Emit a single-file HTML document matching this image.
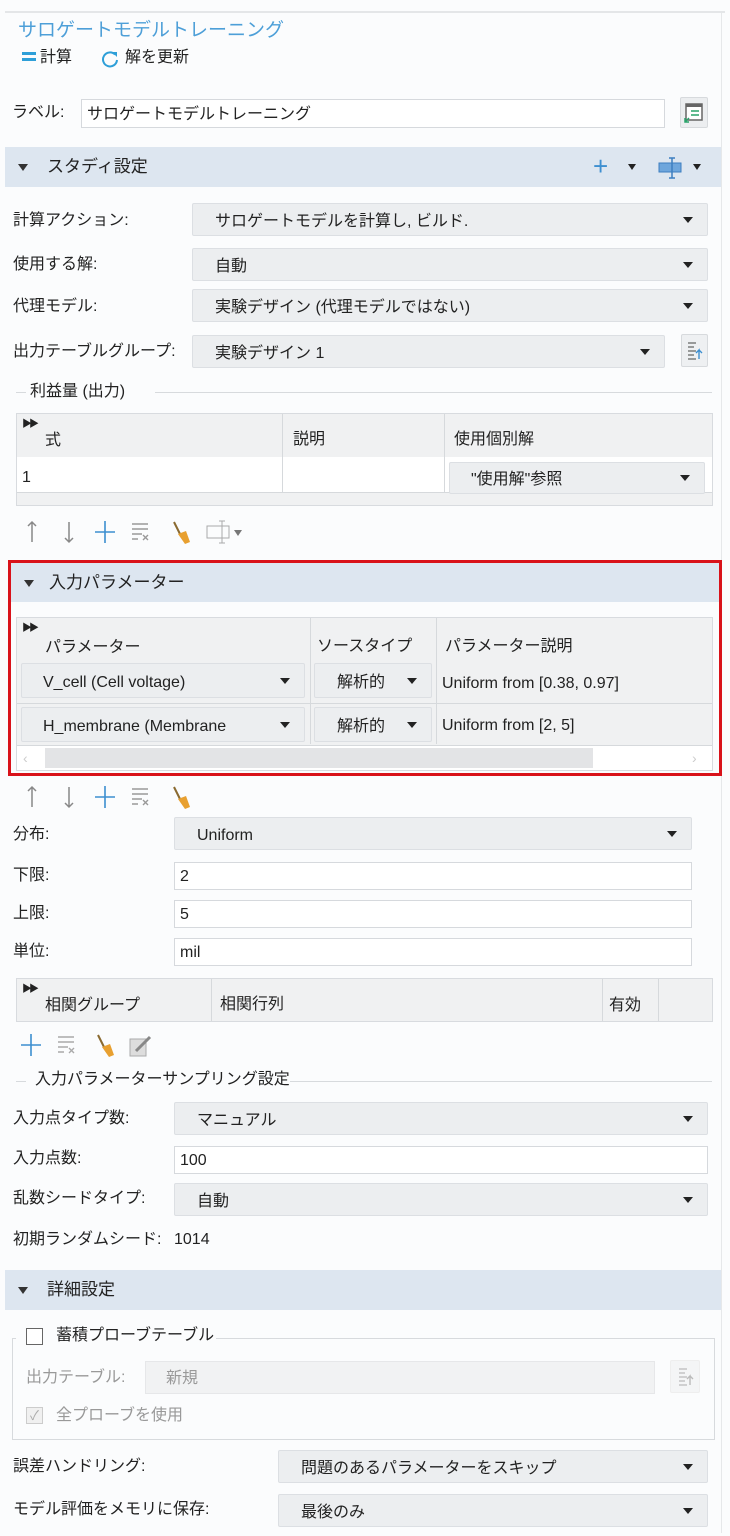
<!DOCTYPE html>
<html><head><meta charset="utf-8"><style>
*{margin:0;padding:0;box-sizing:border-box}
body{width:730px;height:1536px;background:#fbfcfd;font-family:"Liberation Sans","Noto Sans CJK JP",sans-serif;font-size:16px;color:#222;position:relative;overflow:hidden;line-height:20px}
.a{position:absolute;white-space:nowrap}
.lbl{position:absolute;white-space:nowrap;line-height:20px}
.cb{position:absolute;background:#eceef0;border:1px solid #dcdfe3;border-radius:2px;display:flex;align-items:center;padding-left:22px;padding-top:4px;white-space:nowrap;line-height:20px}
.cb:after{content:"";position:absolute;right:14px;top:50%;margin-top:-3px;border-left:5px solid transparent;border-right:5px solid transparent;border-top:6px solid #222}
.in{position:absolute;background:#fff;border:1px solid #d6d9dd;display:flex;align-items:center;padding-left:5px;padding-top:2px;line-height:20px}
.hdr{position:absolute;left:5px;width:716px;background:#dde6f0;height:40px;line-height:40px}
.hdr .t{position:absolute;left:13px;top:17px;border-left:5px solid transparent;border-right:5px solid transparent;border-top:7px solid #333}
.hdr span{position:absolute;left:42px;font-size:17px}
.tbl{position:absolute;border:1px solid #d8dbdf;background:#f0f1f2}
.vl{position:absolute;top:0;bottom:0;width:1px;background:#d6d9dc}
.btn{position:absolute;background:#eef0f2;border:1px solid #d7dadd;border-radius:2px}
.grp{position:absolute;height:1px;background:#d7dadd}
.ff{position:absolute;font-size:10px;letter-spacing:-3px;color:#222}
</style></head><body>
<div class="a" style="left:5px;top:11px;width:720px;height:2px;background:#e4e6e8"></div>
<div class="a" style="left:721px;top:13px;width:1px;height:1520px;background:#e6e8ea"></div>

<div class="a" style="left:18px;top:18px;font-size:19px;line-height:26px;color:#4d9fd8">サロゲートモデルトレーニング</div>
<div class="a" style="left:22px;top:52px;width:14px;height:3px;background:#2e9fd8"></div>
<div class="a" style="left:22px;top:58px;width:14px;height:3px;background:#2e9fd8"></div>
<div class="a" style="left:40px;top:48px;font-size:16px">計算</div>
<svg class="a" style="left:101px;top:50px" width="18" height="18" viewBox="0 0 18 18"><path d="M14 4.5A7 7 0 1 0 16 10" fill="none" stroke="#2e9fd8" stroke-width="2"/><path d="M11 2h5v5z" fill="#2e9fd8"/></svg>
<div class="a" style="left:125px;top:48px;font-size:16px">解を更新</div>

<div class="lbl" style="left:12px;top:103px">ラベル:</div>
<div class="in" style="left:81px;top:99px;width:584px;height:29px">サロゲートモデルトレーニング</div>
<div class="btn" style="left:680px;top:97px;width:28px;height:31px;background:#eceef0"><svg width="26" height="29" viewBox="0 0 26 29"><rect x="5" y="6" width="16" height="16" fill="#fff" stroke="#666" stroke-width="1.5"/><rect x="5" y="6" width="16" height="3" fill="#666"/><path d="M10 13h8M10 17h8" stroke="#2aa36a" stroke-width="1.5"/><path d="M4 24l4-4M4 20v4h4" stroke="#2aa36a" stroke-width="1.5" fill="none"/></svg></div>

<div class="hdr" style="top:147px"><div class="t"></div><span>スタディ設定</span>
<div class="a" style="left:588px;top:0;font-size:26px;color:#3d8fd0;line-height:38px">+</div>
<div class="a" style="left:623px;top:17px;border-left:4px solid transparent;border-right:4px solid transparent;border-top:6px solid #222"></div>
<svg class="a" style="left:653px;top:10px" width="30" height="22"><rect x="1" y="6" width="22" height="9" fill="#6ea6dc" stroke="#3d7fc0"/><path d="M14 1v20M11 1h6M11 21h6" stroke="#3d7fc0" stroke-width="1.5"/></svg>
<div class="a" style="left:688px;top:17px;border-left:4px solid transparent;border-right:4px solid transparent;border-top:6px solid #222"></div>
</div>

<div class="lbl" style="left:13px;top:211px">計算アクション:</div>
<div class="cb" style="left:192px;top:203px;width:516px;height:33px">サロゲートモデルを計算し, ビルド.</div>
<div class="lbl" style="left:13px;top:255px">使用する解:</div>
<div class="cb" style="left:192px;top:248px;width:516px;height:33px">自動</div>
<div class="lbl" style="left:13px;top:297px">代理モデル:</div>
<div class="cb" style="left:192px;top:289px;width:516px;height:33px">実験デザイン (代理モデルではない)</div>
<div class="lbl" style="left:13px;top:342px">出力テーブルグループ:</div>
<div class="cb" style="left:192px;top:335px;width:473px;height:33px">実験デザイン 1</div>
<div class="btn" style="left:681px;top:334px;width:27px;height:33px"><svg width="25" height="31"><path d="M6 8h8M6 12h6M6 16h8M6 20h6M6 24h8" stroke="#666" stroke-width="1.3"/><path d="M17 24v-9l-3 3M17 15l3 3" stroke="#3d8fd0" stroke-width="1.4" fill="none"/></svg></div>

<div class="grp" style="left:16px;top:392px;width:10px"></div>
<div class="lbl" style="left:30px;top:382px">利益量 (出力)</div>
<div class="grp" style="left:155px;top:392px;width:557px"></div>

<div class="tbl" style="left:16px;top:413px;width:697px;height:93px">
 <div class="a" style="left:0;top:43px;width:695px;height:36px;background:#fff;border-bottom:1px solid #d6d9dc"></div>
 <div class="vl" style="left:265px;bottom:13px"></div><div class="vl" style="left:427px;bottom:13px"></div>
 <div class="ff" style="left:5px;top:1px">▶▶</div>
 <div class="lbl" style="left:28px;top:17px">式</div>
 <div class="lbl" style="left:276px;top:16px">説明</div>
 <div class="lbl" style="left:437px;top:16px">使用個別解</div>
 <div class="lbl" style="left:5px;top:54px">1</div>
 <div class="cb" style="left:432px;top:48px;width:256px;height:32px;padding-left:21px">"使用解"参照</div>
</div>

<svg class="a" style="left:22px;top:518px" width="240" height="28"><g stroke="#888" stroke-width="1.5" fill="none"><path d="M10 4v20M6 8l4-4 4 4"/><path d="M47 4v20M43 20l4 4 4-4"/></g><path d="M83 3v22M73 14h20" stroke="#3d8fd0" stroke-width="1.6"/><g stroke="#999" stroke-width="1.4"><path d="M110 6h16M110 11h16M110 16h10M110 21h6"/><path d="M121 17l5 5M126 17l-5 5"/></g><path d="M152 4l7 14" stroke="#8a6a30" stroke-width="2"/><path d="M156 16l8 -3 4 11-5 2z" fill="#e8a030"/><g stroke="#aaa" fill="none"><rect x="185" y="8" width="22" height="12"/><path d="M200 3v22M197 3h6M197 25h6"/></g><path d="M212 12l4 6 4-6z" fill="#777"/></svg>

<div class="a" style="left:8px;top:560px;width:714px;height:216px;border:3px solid #d9121a"></div>
<div class="hdr" style="top:563px;left:11px;width:708px;height:39px;line-height:39px"><div class="t"></div><span style="left:38px">入力パラメーター</span></div>

<div class="tbl" style="left:16px;top:617px;width:697px;height:154px">
 <div class="a" style="left:0;top:85px;width:695px;height:1px;background:#d6d9dc"></div>
 <div class="a" style="left:0;top:127px;width:695px;height:1px;background:#d6d9dc"></div>
 <div class="vl" style="left:293px;bottom:26px"></div><div class="vl" style="left:419px;bottom:26px"></div>
 <div class="ff" style="left:5px;top:1px">▶▶</div>
 <div class="lbl" style="left:28px;top:20px">パラメーター</div>
 <div class="lbl" style="left:300px;top:19px">ソースタイプ</div>
 <div class="lbl" style="left:428px;top:19px">パラメーター説明</div>
 <div class="cb" style="left:4px;top:45px;width:284px;height:35px;padding-left:21px">V_cell (Cell voltage)</div>
 <div class="cb" style="left:297px;top:45px;width:118px;height:35px">解析的</div>
 <div class="lbl" style="left:425px;top:56px">Uniform from [0.38, 0.97]</div>
 <div class="cb" style="left:4px;top:89px;width:284px;height:35px;padding-left:21px">H_membrane (Membrane</div>
 <div class="cb" style="left:297px;top:89px;width:118px;height:35px">解析的</div>
 <div class="lbl" style="left:425px;top:98px">Uniform from [2, 5]</div>
 <div class="a" style="left:0;top:128px;width:695px;height:24px;background:#fff"></div>
 <div class="a" style="left:28px;top:130px;width:548px;height:20px;background:#e3e4e6"></div>
 <div class="a" style="left:6px;top:130px;color:#ccc;font-size:14px">‹</div>
 <div class="a" style="left:675px;top:130px;color:#ccc;font-size:14px">›</div>
</div>

<svg class="a" style="left:22px;top:783px" width="180" height="28"><g stroke="#888" stroke-width="1.5" fill="none"><path d="M10 4v20M6 8l4-4 4 4"/><path d="M47 4v20M43 20l4 4 4-4"/></g><path d="M83 3v22M73 14h20" stroke="#3d8fd0" stroke-width="1.6"/><g stroke="#999" stroke-width="1.4"><path d="M110 6h16M110 11h16M110 16h10M110 21h6"/><path d="M121 17l5 5M126 17l-5 5"/></g><path d="M152 4l7 14" stroke="#8a6a30" stroke-width="2"/><path d="M156 16l8 -3 4 11-5 2z" fill="#e8a030"/></svg>

<div class="lbl" style="left:13px;top:825px">分布:</div>
<div class="cb" style="left:174px;top:817px;width:518px;height:33px">Uniform</div>
<div class="lbl" style="left:13px;top:866px">下限:</div>
<div class="in" style="left:174px;top:862px;width:518px;height:28px">2</div>
<div class="lbl" style="left:13px;top:904px">上限:</div>
<div class="in" style="left:174px;top:900px;width:518px;height:28px">5</div>
<div class="lbl" style="left:13px;top:942px">単位:</div>
<div class="in" style="left:174px;top:938px;width:518px;height:28px">mil</div>

<div class="tbl" style="left:16px;top:978px;width:697px;height:44px">
 <div class="vl" style="left:194px"></div><div class="vl" style="left:585px"></div><div class="vl" style="left:641px"></div>
 <div class="ff" style="left:5px;top:1px">▶▶</div>
 <div class="lbl" style="left:28px;top:17px">相関グループ</div>
 <div class="lbl" style="left:203px;top:16px">相関行列</div>
 <div class="lbl" style="left:592px;top:17px">有効</div>
</div>

<svg class="a" style="left:16px;top:1031px" width="150" height="28"><path d="M15 3v22M5 14h20" stroke="#3d8fd0" stroke-width="1.6"/><g stroke="#aaa" stroke-width="1.4"><path d="M42 6h16M42 11h16M42 16h10M42 21h6"/><path d="M53 17l5 5M58 17l-5 5"/></g><path d="M82 4l7 14" stroke="#8a6a30" stroke-width="2"/><path d="M86 16l8 -3 4 11-5 2z" fill="#e8a030"/><rect x="114" y="8" width="16" height="17" fill="#ddd" stroke="#aaa"/><path d="M120 20l14-14" stroke="#888" stroke-width="3"/></svg>

<div class="grp" style="left:16px;top:1081px;width:10px"></div>
<div class="lbl" style="left:35px;top:1070px">入力パラメーターサンプリング設定</div>
<div class="grp" style="left:290px;top:1081px;width:422px"></div>

<div class="lbl" style="left:13px;top:1109px">入力点タイプ数:</div>
<div class="cb" style="left:174px;top:1102px;width:534px;height:33px">マニュアル</div>
<div class="lbl" style="left:13px;top:1149px">入力点数:</div>
<div class="in" style="left:174px;top:1146px;width:534px;height:28px">100</div>
<div class="lbl" style="left:13px;top:1189px">乱数シードタイプ:</div>
<div class="cb" style="left:174px;top:1183px;width:534px;height:33px">自動</div>
<div class="lbl" style="left:13px;top:1230px">初期ランダムシード:</div>
<div class="lbl" style="left:174px;top:1230px">1014</div>

<div class="hdr" style="top:1270px"><div class="t"></div><span>詳細設定</span></div>

<div class="a" style="left:12px;top:1338px;width:703px;height:102px;border:1px solid #d7dadd"></div>
<div class="a" style="left:16px;top:1326px;width:200px;height:24px;background:#fbfcfd"></div>
<div class="a" style="left:26px;top:1328px;width:17px;height:17px;border:1px solid #666;background:#fff"></div>
<div class="lbl" style="left:56px;top:1326px">蓄積プローブテーブル</div>
<div class="lbl" style="left:26px;top:1368px;color:#999">出力テーブル:</div>
<div class="a" style="left:145px;top:1361px;width:510px;height:33px;background:#f1f2f3;border:1px solid #e6e7e9;line-height:33px;padding-left:20px;color:#999">新規</div>
<div class="btn" style="left:670px;top:1360px;width:30px;height:33px;background:#f4f5f6;border-color:#eee"><svg width="28" height="31"><path d="M8 8h8M8 12h6M8 16h8M8 20h6M8 24h8" stroke="#bbb" stroke-width="1.3"/><path d="M19 24v-9l-3 3M19 15l3 3" stroke="#bbb" stroke-width="1.4" fill="none"/></svg></div>
<div class="a" style="left:26px;top:1407px;width:17px;height:17px;border:1px solid #ccc;background:#f0f0f0;color:#aaa;font-size:13px;line-height:15px;text-align:center">✓</div>
<div class="lbl" style="left:56px;top:1406px;color:#999">全プローブを使用</div>

<div class="lbl" style="left:13px;top:1457px">誤差ハンドリング:</div>
<div class="cb" style="left:278px;top:1450px;width:430px;height:33px">問題のあるパラメーターをスキップ</div>
<div class="lbl" style="left:13px;top:1500px">モデル評価をメモリに保存:</div>
<div class="cb" style="left:278px;top:1494px;width:430px;height:33px">最後のみ</div>
</body></html>
